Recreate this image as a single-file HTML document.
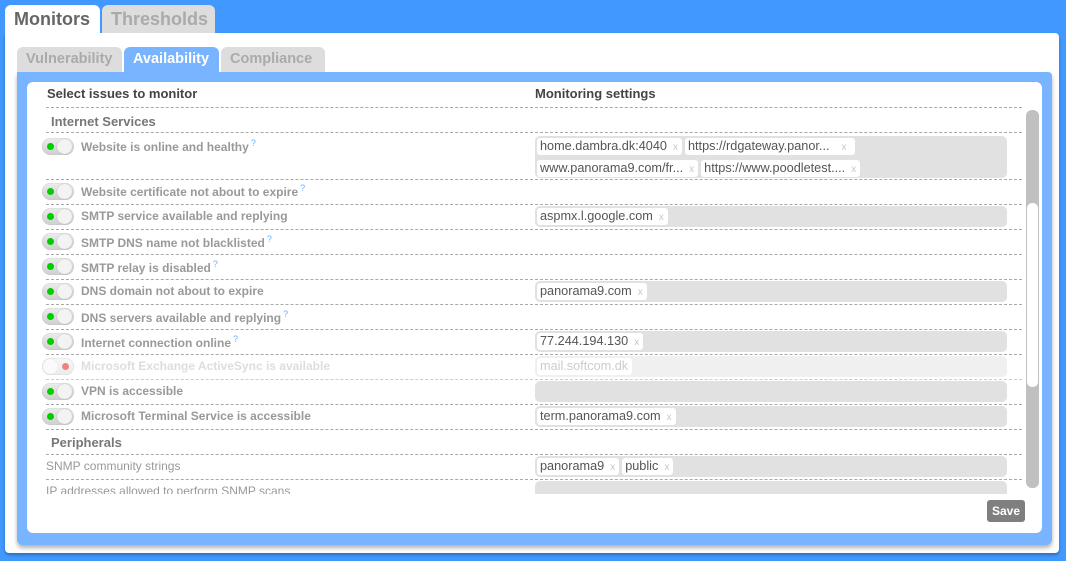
<!DOCTYPE html>
<html><head><meta charset="utf-8"><style>
*{box-sizing:border-box;margin:0;padding:0}
body{width:1066px;height:561px;background:#4199ff;font-family:"Liberation Sans",Arial,sans-serif;position:relative;overflow:hidden}
.a{position:absolute}
.tab{position:absolute;border-radius:6px 6px 0 0;font-weight:bold;padding-left:9px}
.lbl{position:absolute;left:81px;font-size:12px;color:#999;font-weight:bold;white-space:nowrap}
.lbl sup{color:#6ab0ff;font-size:9px;font-weight:normal;margin-left:2px}
.sec{position:absolute;left:51px;font-size:13px;color:#777;font-weight:bold}
.line{position:absolute;left:46px;width:976px;border-top:1px dashed #a8a8a8;height:0}
.tg{position:absolute;left:42px;width:32px;height:17px;border-radius:9px;background:linear-gradient(#ececec,#cfcfcf);box-shadow:inset 0 0 1px #aaa}
.tg:before{content:"";position:absolute;left:5px;top:5px;width:7px;height:7px;border-radius:50%;background:#0c0}
.tg:after{content:"";position:absolute;left:15px;top:1px;width:15px;height:15px;border-radius:50%;background:#f3f3f3;box-shadow:0 0 1px #999}
.tg.off{background:linear-gradient(#f8f8f8,#ececec)}
.tg.off:before{left:20px;background:#f08080}
.tg.off:after{left:1px;background:#fafafa;box-shadow:0 0 1px #ccc}
.inp{position:absolute;left:535px;width:472px;height:21px;background:#e1e1e1;border-radius:5px;padding:2px 0 0 2px}
.t{display:inline-block;background:#fff;border-radius:3px;height:17px;line-height:17px;font-size:12.7px;color:#555;padding:0 4px 0 3px;margin-right:3px;vertical-align:top;white-space:nowrap}
.t i{font-style:normal;color:#c8c8c8;font-size:10px;margin-left:6px}
</style></head><body>
<div class="a" style="left:5px;top:33px;width:1054px;height:520px;background:#fff;border-radius:0 4px 4px 4px;box-shadow:0 2px 3px rgba(0,0,0,.3)"></div>
<div class="tab" style="left:5px;top:5px;width:95px;height:30px;background:#fff;font-size:18px;color:#666;line-height:29px;">Monitors</div>
<div class="tab" style="left:102px;top:5px;width:113px;height:28px;background:#ddd;font-size:18px;color:#aaa;line-height:29px;">Thresholds</div>

<div class="a" style="left:17px;top:72px;width:1035px;height:473px;background:#78b4ff;border-radius:0 4px 6px 6px;box-shadow:0 3px 4px rgba(0,0,0,.3)"></div>
<div class="tab" style="left:17px;top:47px;width:105px;height:25px;background:#ddd;font-size:14.5px;color:#aaa;line-height:25px;">Vulnerability</div>
<div class="tab" style="left:124px;top:47px;width:95px;height:25px;background:#78b4ff;font-size:14.5px;color:#fff;line-height:25px;">Availability</div>
<div class="tab" style="left:221px;top:47px;width:104px;height:25px;background:#ddd;font-size:14.5px;color:#aaa;line-height:25px;">Compliance</div>

<div class="a" style="left:27px;top:82px;width:1015px;height:451px;background:#fff;border-radius:6px"></div>

<div class="a" style="left:47px;top:86px;font-size:13px;font-weight:bold;color:#444">Select issues to monitor</div>
<div class="a" style="left:535px;top:86px;font-size:13px;font-weight:bold;color:#444">Monitoring settings</div>

<div class="line" style="top:107px"></div>
<div class="sec" style="top:114px">Internet Services</div>
<div class="line" style="top:132px"></div>

<div class="tg" style="top:138px"></div><div class="lbl" style="top:138px">Website is online and healthy<sup>?</sup></div>
<div class="inp" style="top:136px;height:42px"><span class="t">home.dambra.dk:4040<i>x</i></span><span class="t" style="width:170px">https://rdgateway.panor...<i style="margin-left:12px">x</i></span><br><span class="t" style="margin-top:4px">www.panorama9.com/fr...<i>x</i></span><span class="t" style="margin-top:4px">https://www.poodletest....<i>x</i></span></div>
<div class="line" style="top:179px"></div>

<div class="tg" style="top:183px"></div><div class="lbl" style="top:183px">Website certificate not about to expire<sup>?</sup></div>
<div class="line" style="top:204px"></div>

<div class="tg" style="top:208px"></div><div class="lbl" style="top:209px">SMTP service available and replying</div>
<div class="inp" style="top:206px"><span class="t">aspmx.l.google.com<i>x</i></span></div>
<div class="line" style="top:229px"></div>

<div class="tg" style="top:233px"></div><div class="lbl" style="top:234px">SMTP DNS name not blacklisted<sup>?</sup></div>
<div class="line" style="top:254px"></div>

<div class="tg" style="top:258px"></div><div class="lbl" style="top:259px">SMTP relay is disabled<sup>?</sup></div>
<div class="line" style="top:279px"></div>

<div class="tg" style="top:283px"></div><div class="lbl" style="top:284px">DNS domain not about to expire</div>
<div class="inp" style="top:281px"><span class="t">panorama9.com<i>x</i></span></div>
<div class="line" style="top:304px"></div>

<div class="tg" style="top:308px"></div><div class="lbl" style="top:309px">DNS servers available and replying<sup>?</sup></div>
<div class="line" style="top:329px"></div>

<div class="tg" style="top:333px"></div><div class="lbl" style="top:334px">Internet connection online<sup>?</sup></div>
<div class="inp" style="top:331px"><span class="t">77.244.194.130<i>x</i></span></div>
<div class="line" style="top:354px"></div>

<div class="tg off" style="top:358px"></div>
<div class="lbl" style="top:359px;color:#ddd">Microsoft Exchange ActiveSync is available</div>
<div class="inp" style="top:356px;background:#f0f0f0"><span class="t" style="color:#ccc">mail.softcom.dk</span></div>
<div class="line" style="top:379px;border-color:#ccc"></div>

<div class="tg" style="top:383px"></div><div class="lbl" style="top:384px">VPN is accessible</div>
<div class="inp" style="top:381px"></div>
<div class="line" style="top:404px"></div>

<div class="tg" style="top:408px"></div><div class="lbl" style="top:409px">Microsoft Terminal Service is accessible</div>
<div class="inp" style="top:406px"><span class="t">term.panorama9.com<i>x</i></span></div>
<div class="line" style="top:429px"></div>

<div class="sec" style="top:435px">Peripherals</div>
<div class="line" style="top:454px"></div>
<div class="lbl" style="left:46px;top:459px;font-weight:normal;color:#999">SNMP community strings</div>
<div class="inp" style="top:456px"><span class="t">panorama9<i>x</i></span><span class="t">public<i>x</i></span></div>
<div class="line" style="top:479px"></div>
<div class="a" style="left:40px;top:481px;width:980px;height:13px;overflow:hidden">
<div class="lbl" style="left:6px;top:3px;font-weight:normal;color:#999">IP addresses allowed to perform SNMP scans</div>
<div class="inp" style="left:495px;top:0px"></div></div>

<div class="a" style="left:1026px;top:110px;width:13px;height:378px;background:#c0c0c0;border-radius:6px"></div>
<div class="a" style="left:1027px;top:203px;width:11px;height:184px;background:#fff;border-radius:5px"></div>

<div class="a" style="left:987px;top:500px;width:38px;height:22px;background:#7f7f7f;border-radius:3px;color:#fff;font-weight:bold;font-size:12px;line-height:22px;text-align:center">Save</div>
</body></html>
